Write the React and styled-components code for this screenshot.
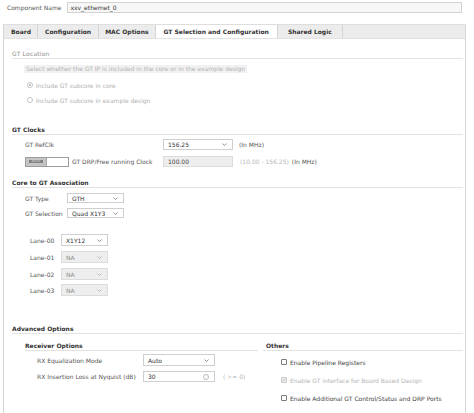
import React from 'react';
import styled, { createGlobalStyle } from 'styled-components';

const Global = createGlobalStyle`
  html, body { margin: 0; padding: 0; background: #fff; }
  body {
    font-family: "DejaVu Sans", "Liberation Sans", sans-serif;
    font-size: 6px;
    color: #3c3c3c;
    width: 474px;
    height: 413px;
    overflow: hidden;
  }
`;

const Page = styled.div`
  width: 474px;
  height: 413px;
  overflow: hidden;
`;

const NameRow = styled.div`
  display: flex;
  align-items: center;
  height: 14px;
  padding: 0 12px 0 7px;
  gap: 6px;
  color: #555;
`;

const NameInput = styled.div`
  flex: 1;
  height: 11px;
  box-sizing: border-box;
  border: 1px solid #d2d2d2;
  background: #f7f7f7;
  display: flex;
  align-items: center;
  padding-left: 2px;
  color: #333;
`;

const Panel = styled.div`
  margin: 10px 8px 0 3px;
  border-left: 1px solid #d6d6d6;
  border-right: 1px solid #d6d6d6;
  height: 400px;
`;

const TabBar = styled.div`
  display: flex;
  height: 13px;
  background: #ececec;
  border-top: 1px solid #dedede;
  border-bottom: 1px solid #e2e2e2;
  padding-left: 1px;
`;

const Tab = styled.div`
  display: flex;
  align-items: center;
  padding: 0 ${p => p.$pad || 6}px;
  font-weight: bold;
  color: #333;
  background: ${p => (p.$active ? '#fff' : '#ececec')};
  border-right: 1px solid #d4d4d4;
  white-space: nowrap;
`;

const Content = styled.div`
  display: flex;
  flex-direction: column;
  padding: 0 2px 0 8px;
`;

const Heading = styled.div`
  margin-top: ${p => p.$mt || 0}px;
  height: ${p => p.$h || 9}px;
  line-height: ${p => p.$h || 9}px;
  color: ${p => (p.$disabled ? '#8c8c8c' : '#333')};
  border-bottom: 1px solid #e3e3e3;
  padding-left: ${p => p.$pad || 0}px;
  font-weight: ${p => (p.$disabled ? 'normal' : 'bold')};
  letter-spacing: ${p => (p.$disabled ? '0.2px' : '0')};
`;

const Desc = styled.div`
  margin-top: 6px;
  margin-left: 12px;
  align-self: flex-start;
  height: 8px;
  line-height: 8px;
  padding: 0 2px;
  background: #f1f1f1;
  color: #b2b2b2;
`;

const RadioRow = styled.div`
  margin-top: ${p => p.$mt}px;
  margin-left: 15px;
  height: 10px;
  display: flex;
  align-items: center;
  gap: 3px;
  color: #b0b0b0;
`;

const RadioCircle = styled.span`
  width: 6px;
  height: 6px;
  box-sizing: border-box;
  border-radius: 50%;
  border: 1px solid #c6c6c6;
  display: flex;
  align-items: center;
  justify-content: center;
  &::after {
    content: '';
    width: 2px;
    height: 2px;
    border-radius: 50%;
    background: ${p => (p.$on ? '#b0b0b0' : 'transparent')};
  }
`;

const FieldRow = styled.div`
  margin-top: ${p => p.$mt}px;
  margin-left: ${p => p.$indent}px;
  height: ${p => p.$h || 11}px;
  display: flex;
  align-items: center;
`;

const Label = styled.div`
  width: ${p => p.$w}px;
  flex-shrink: 0;
  display: flex;
  align-items: center;
  gap: 3px;
  color: #555;
  white-space: nowrap;
`;

const Box = styled.div`
  width: ${p => p.$w}px;
  height: 100%;
  box-sizing: border-box;
  border: 1px solid ${p => (p.$disabled ? '#dcdcdc' : '#cfcfcf')};
  background: ${p => (p.$disabled ? '#eeeeee' : '#fff')};
  display: flex;
  align-items: center;
  justify-content: space-between;
  padding: 0 5px 0 4px;
  color: ${p => (p.$disabled ? '#8a8a8a' : '#333')};
  flex-shrink: 0;
`;

const Hint = styled.span`
  margin-left: ${p => p.$ml || 6}px;
  color: ${p => (p.$faint ? '#b6b6b6' : '#555')};
  white-space: nowrap;
`;

const Toggle = styled.div`
  width: 44px;
  height: 10px;
  box-sizing: border-box;
  border: 1px solid #9c9c9c;
  display: flex;
  background: #fff;
`;

const ToggleKnob = styled.div`
  width: 20px;
  height: 100%;
  background: #c4c4c4;
  display: flex;
  align-items: center;
  justify-content: center;
  border-right: 1px solid #a8a8a8;
`;

const ToggleText = styled.span`
  background: #808080;
  color: #e0e0e0;
  font-size: 3px;
  line-height: 3px;
  padding: 0 3px;
  height: 3px;
`;

const Columns = styled.div`
  display: flex;
  margin-top: 7px;
`;

const Column = styled.div`
  display: flex;
  flex-direction: column;
  margin-left: ${p => p.$ml}px;
  width: ${p => p.$w}px;
`;

const CheckRow = styled.div`
  margin-top: ${p => p.$mt}px;
  margin-left: 18px;
  height: 10px;
  display: flex;
  align-items: center;
  gap: 3px;
  color: ${p => (p.$disabled ? '#b4b4b4' : '#444')};
`;

const CheckBox = styled.span`
  width: 6px;
  height: 6px;
  box-sizing: border-box;
  border: 1px solid ${p => (p.$disabled ? '#c8c8c8' : '#7a7a7a')};
  border-radius: 1px;
  background: ${p => (p.$disabled ? '#f0f0f0' : '#fff')};
  display: flex;
  align-items: center;
  justify-content: center;
`;

const ResetDot = styled.span`
  width: 4px;
  height: 4px;
  border-radius: 50%;
  border: 1px solid #bcbcbc;
`;

const Chevron = ({ disabled }) => (
  <svg width="5" height="3" viewBox="0 0 5 3">
    <path d="M0.5 0.5 L2.5 2.5 L4.5 0.5" fill="none" stroke={disabled ? '#aaa' : '#777'} strokeWidth="0.8" />
  </svg>
);

const Select = ({ w, value, disabled }) => (
  <Box $w={w} $disabled={disabled}>
    <span>{value}</span>
    <Chevron disabled={disabled} />
  </Box>
);

const lanes = [
  { name: 'Lane-00', value: 'X1Y12', disabled: false, mt: 16, h: 12 },
  { name: 'Lane-01', value: 'NA', disabled: true, mt: 5, h: 12 },
  { name: 'Lane-02', value: 'NA', disabled: true, mt: 5, h: 12 },
  { name: 'Lane-03', value: 'NA', disabled: true, mt: 4, h: 12 },
];

export default function App() {
  return (
    <Page>
      <Global />
      <NameRow>
        <span>Component Name</span>
        <NameInput>xxv_ethernet_0</NameInput>
      </NameRow>
      <Panel>
        <TabBar>
          <Tab>Board</Tab>
          <Tab $pad={7}>Configuration</Tab>
          <Tab>MAC Options</Tab>
          <Tab $active $pad={8}>GT Selection and Configuration</Tab>
          <Tab $pad={10}>Shared Logic</Tab>
        </TabBar>
        <Content>
          <Heading $mt={10} $disabled>GT Location</Heading>
          <Desc>Select whether the GT IP is included in the core or in the example design</Desc>
          <RadioRow $mt={7}>
            <RadioCircle $on />
            Include GT subcore in core
          </RadioRow>
          <RadioRow $mt={5}>
            <RadioCircle />
            Include GT subcore in example design
          </RadioRow>

          <Heading $mt={20}>GT Clocks</Heading>
          <FieldRow $mt={4} $indent={13}>
            <Label $w={138}>GT RefClk</Label>
            <Select w={70} value="156.25" />
            <Hint>(In MHz)</Hint>
          </FieldRow>
          <FieldRow $mt={6} $indent={13}>
            <Label $w={138}>
              <Toggle>
                <ToggleKnob>
                  <ToggleText>AUTO</ToggleText>
                </ToggleKnob>
              </Toggle>
              GT DRP/Free running Clock
            </Label>
            <Box $w={70} $disabled>
              <span style={{ color: '#444' }}>100.00</span>
            </Box>
            <Hint $faint $ml={7}>(10.00 - 156.25)</Hint>
            <Hint $ml={3}>(In MHz)</Hint>
          </FieldRow>

          <Heading $mt={11}>Core to GT Association</Heading>
          <FieldRow $mt={5} $indent={13} $h={10}>
            <Label $w={42}>GT Type</Label>
            <Select w={57} value="GTH" />
          </FieldRow>
          <FieldRow $mt={5} $indent={13} $h={10}>
            <Label $w={42}>GT Selection</Label>
            <Select w={57} value="Quad X1Y3" />
          </FieldRow>

          {lanes.map(l => (
            <FieldRow key={l.name} $mt={l.mt} $indent={18} $h={l.h}>
              <Label $w={31}>{l.name}</Label>
              <Select w={47} value={l.value} disabled={l.disabled} />
            </FieldRow>
          ))}

          <Heading $mt={28}>Advanced Options</Heading>
          <Columns>
            <Column $ml={13} $w={233}>
              <Heading>Receiver Options</Heading>
              <FieldRow $mt={3} $indent={12} $h={12}>
                <Label $w={106}>RX Equalization Mode</Label>
                <Select w={72} value="Auto" />
              </FieldRow>
              <FieldRow $mt={5} $indent={12} $h={11}>
                <Label $w={106}>RX Insertion Loss at Nyquist (dB)</Label>
                <Box $w={72}>
                  <span>30</span>
                  <ResetDot />
                </Box>
                <Hint $faint $ml={8}>( &gt;= 0)</Hint>
              </FieldRow>
            </Column>
            <Column $ml={5} $w={200}>
              <Heading $pad={3}>Others</Heading>
              <CheckRow $mt={6}>
                <CheckBox />
                Enable Pipeline Registers
              </CheckRow>
              <CheckRow $mt={8} $disabled>
                <CheckBox $disabled>
                  <svg width="4" height="4" viewBox="0 0 4 4">
                    <path d="M0.5 2 L1.6 3.1 L3.5 0.7" fill="none" stroke="#b0b0b0" strokeWidth="0.8" />
                  </svg>
                </CheckBox>
                Enable GT interface for Board Based Design
              </CheckRow>
              <CheckRow $mt={8}>
                <CheckBox />
                Enable Additional GT Control/Status and DRP Ports
              </CheckRow>
            </Column>
          </Columns>
        </Content>
      </Panel>
    </Page>
  );
}
